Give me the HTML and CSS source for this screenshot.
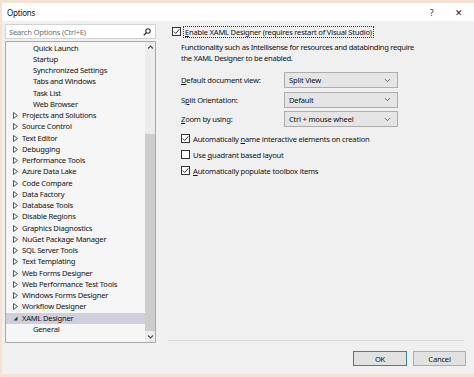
FILE: index.html
```html
<!DOCTYPE html>
<html>
<head>
<meta charset="utf-8">
<link rel="stylesheet" href="styles.css">
</head>
<body>
<div class="window">
  <div class="titlebar">
    <span class="title">Options</span>
    <span class="tb-btns"><span class="help">?</span><span class="close">✕</span></span>
  </div>
  <div class="body">
    <div class="left">
      <div class="search">
        <span class="placeholder">Search Options (Ctrl+E)</span>
        <svg class="mag" width="8" height="8" viewBox="0 0 8 8"><circle cx="5" cy="3" r="2.2" fill="none" stroke="#333" stroke-width="1.1"/><line x1="3.4" y1="4.6" x2="0.8" y2="7.2" stroke="#333" stroke-width="1.3"/></svg>
      </div>
      <div class="tree">
        <div class="rows">
          <div class="row l2">Quick Launch</div>
          <div class="row l2">Startup</div>
          <div class="row l2">Synchronized Settings</div>
          <div class="row l2">Tabs and Windows</div>
          <div class="row l2">Task List</div>
          <div class="row l2">Web Browser</div>
          <div class="row"><svg class="tri" width="5" height="7" viewBox="0 0 5 7"><path d="M0.5 0.5 L4.5 3.5 L0.5 6.5 Z" fill="none" stroke="#555" stroke-width="1"/></svg>Projects and Solutions</div>
          <div class="row"><svg class="tri" width="5" height="7" viewBox="0 0 5 7"><path d="M0.5 0.5 L4.5 3.5 L0.5 6.5 Z" fill="none" stroke="#555" stroke-width="1"/></svg>Source Control</div>
          <div class="row"><svg class="tri" width="5" height="7" viewBox="0 0 5 7"><path d="M0.5 0.5 L4.5 3.5 L0.5 6.5 Z" fill="none" stroke="#555" stroke-width="1"/></svg>Text Editor</div>
          <div class="row"><svg class="tri" width="5" height="7" viewBox="0 0 5 7"><path d="M0.5 0.5 L4.5 3.5 L0.5 6.5 Z" fill="none" stroke="#555" stroke-width="1"/></svg>Debugging</div>
          <div class="row"><svg class="tri" width="5" height="7" viewBox="0 0 5 7"><path d="M0.5 0.5 L4.5 3.5 L0.5 6.5 Z" fill="none" stroke="#555" stroke-width="1"/></svg>Performance Tools</div>
          <div class="row"><svg class="tri" width="5" height="7" viewBox="0 0 5 7"><path d="M0.5 0.5 L4.5 3.5 L0.5 6.5 Z" fill="none" stroke="#555" stroke-width="1"/></svg>Azure Data Lake</div>
          <div class="row"><svg class="tri" width="5" height="7" viewBox="0 0 5 7"><path d="M0.5 0.5 L4.5 3.5 L0.5 6.5 Z" fill="none" stroke="#555" stroke-width="1"/></svg>Code Compare</div>
          <div class="row"><svg class="tri" width="5" height="7" viewBox="0 0 5 7"><path d="M0.5 0.5 L4.5 3.5 L0.5 6.5 Z" fill="none" stroke="#555" stroke-width="1"/></svg>Data Factory</div>
          <div class="row"><svg class="tri" width="5" height="7" viewBox="0 0 5 7"><path d="M0.5 0.5 L4.5 3.5 L0.5 6.5 Z" fill="none" stroke="#555" stroke-width="1"/></svg>Database Tools</div>
          <div class="row"><svg class="tri" width="5" height="7" viewBox="0 0 5 7"><path d="M0.5 0.5 L4.5 3.5 L0.5 6.5 Z" fill="none" stroke="#555" stroke-width="1"/></svg>Disable Regions</div>
          <div class="row"><svg class="tri" width="5" height="7" viewBox="0 0 5 7"><path d="M0.5 0.5 L4.5 3.5 L0.5 6.5 Z" fill="none" stroke="#555" stroke-width="1"/></svg>Graphics Diagnostics</div>
          <div class="row"><svg class="tri" width="5" height="7" viewBox="0 0 5 7"><path d="M0.5 0.5 L4.5 3.5 L0.5 6.5 Z" fill="none" stroke="#555" stroke-width="1"/></svg>NuGet Package Manager</div>
          <div class="row"><svg class="tri" width="5" height="7" viewBox="0 0 5 7"><path d="M0.5 0.5 L4.5 3.5 L0.5 6.5 Z" fill="none" stroke="#555" stroke-width="1"/></svg>SQL Server Tools</div>
          <div class="row"><svg class="tri" width="5" height="7" viewBox="0 0 5 7"><path d="M0.5 0.5 L4.5 3.5 L0.5 6.5 Z" fill="none" stroke="#555" stroke-width="1"/></svg>Text Templating</div>
          <div class="row"><svg class="tri" width="5" height="7" viewBox="0 0 5 7"><path d="M0.5 0.5 L4.5 3.5 L0.5 6.5 Z" fill="none" stroke="#555" stroke-width="1"/></svg>Web Forms Designer</div>
          <div class="row"><svg class="tri" width="5" height="7" viewBox="0 0 5 7"><path d="M0.5 0.5 L4.5 3.5 L0.5 6.5 Z" fill="none" stroke="#555" stroke-width="1"/></svg>Web Performance Test Tools</div>
          <div class="row"><svg class="tri" width="5" height="7" viewBox="0 0 5 7"><path d="M0.5 0.5 L4.5 3.5 L0.5 6.5 Z" fill="none" stroke="#555" stroke-width="1"/></svg>Windows Forms Designer</div>
          <div class="row"><svg class="tri" width="5" height="7" viewBox="0 0 5 7"><path d="M0.5 0.5 L4.5 3.5 L0.5 6.5 Z" fill="none" stroke="#555" stroke-width="1"/></svg>Workflow Designer</div>
          <div class="row selected"><svg class="tri" width="5" height="7" viewBox="0 0 5 7"><path d="M4.5 1.5 L4.5 5.5 L0.5 5.5 Z" fill="#333"/></svg>XAML Designer</div>
          <div class="row l2">General</div>
        </div>
        <div class="scrollbar">
          <svg class="arrow" width="7" height="5" viewBox="0 0 7 5"><path d="M1 3.5 L3.5 1 L6 3.5" fill="none" stroke="#555" stroke-width="1.2"/></svg>
          <div class="track"><div class="thumb"></div></div>
          <svg class="arrow" width="7" height="5" viewBox="0 0 7 5"><path d="M1 1.5 L3.5 4 L6 1.5" fill="none" stroke="#555" stroke-width="1.2"/></svg>
        </div>
      </div>
    </div>
    <div class="right">
      <div class="check-row main">
        <span class="cb"><svg width="9" height="9" viewBox="0 0 9 9"><path d="M1.8 4.6 L3.7 6.5 L7.3 2.3" fill="none" stroke="#333" stroke-width="1"/></svg></span>
        <span class="focus"><u>E</u>nable XAML Designer (requires restart of Visual Studio)</span>
      </div>
      <p class="desc">Functionality such as Intellisense for resources and databinding require<br>the XAML Designer to be enabled.</p>
      <div class="fields">
        <div class="field"><span class="label"><u>D</u>efault document view:</span><span class="select">Split View<svg class="chev" width="7" height="5" viewBox="0 0 7 5"><path d="M1 1.2 L3.5 3.7 L6 1.2" fill="none" stroke="#666" stroke-width="1"/></svg></span></div>
        <div class="field"><span class="label">S<u>p</u>lit Orientation:</span><span class="select">Default<svg class="chev" width="7" height="5" viewBox="0 0 7 5"><path d="M1 1.2 L3.5 3.7 L6 1.2" fill="none" stroke="#666" stroke-width="1"/></svg></span></div>
        <div class="field"><span class="label"><u>Z</u>oom by using:</span><span class="select">Ctrl + mouse wheel<svg class="chev" width="7" height="5" viewBox="0 0 7 5"><path d="M1 1.2 L3.5 3.7 L6 1.2" fill="none" stroke="#666" stroke-width="1"/></svg></span></div>
      </div>
      <div class="checks">
        <div class="check-row"><span class="cb"><svg width="9" height="9" viewBox="0 0 9 9"><path d="M1.8 4.6 L3.7 6.5 L7.3 2.3" fill="none" stroke="#333" stroke-width="1"/></svg></span><span>Automatically <u>n</u>ame interactive elements on creation</span></div>
        <div class="check-row"><span class="cb"></span><span>Use <u>q</u>uadrant based layout</span></div>
        <div class="check-row"><span class="cb"><svg width="9" height="9" viewBox="0 0 9 9"><path d="M1.8 4.6 L3.7 6.5 L7.3 2.3" fill="none" stroke="#333" stroke-width="1"/></svg></span><span><u>A</u>utomatically populate toolbox items</span></div>
      </div>
      <div class="spacer"></div>
      <div class="sep"></div>
      <div class="buttons">
        <span class="btn default">OK</span>
        <span class="btn">Cancel</span>
      </div>
    </div>
  </div>
</div>
</body>
</html>
```

FILE: styles.css
```css
html, body {
  margin: 0;
  padding: 0;
}
body {
  width: 474px;
  height: 377px;
  overflow: hidden;
  background: #f0f0f0;
  font-family: "Noto Sans", "Open Sans", sans-serif;
  font-size: 7.6px;
  letter-spacing: -0.22px;
  color: #111;
}
.window {
  box-sizing: border-box;
  width: 474px;
  height: 377px;
  display: flex;
  flex-direction: column;
  border-top: 3px solid #f6e2d4;
  border-left: 2px solid #f6e2d4;
  border-bottom: 3px solid #f6e2d4;
  background: #f0f0f0;
}
.titlebar {
  height: 18px;
  background: #ffffff;
  display: flex;
  align-items: center;
  justify-content: space-between;
  padding-left: 5px;
}
.title {
  font-size: 8px;
  color: #111;
}
.tb-btns {
  display: flex;
  align-items: center;
  gap: 22px;
  margin-right: 11px;
  font-size: 8.5px;
  color: #222;
}
.help { font-size: 8px; }
.close { font-size: 9px; }
.body {
  flex: 1;
  display: flex;
  min-height: 0;
}
.left {
  width: 151px;
  margin-left: 3px;
  padding-top: 3px;
  display: flex;
  flex-direction: column;
}
.search {
  box-sizing: border-box;
  height: 15px;
  background: #fff;
  border: 1px solid #d3d3d3;
  display: flex;
  align-items: center;
  justify-content: space-between;
  padding: 0 4px 0 3px;
}
.placeholder {
  color: #707070;
}
.tree {
  box-sizing: border-box;
  margin-top: 2px;
  height: 302px;
  border: 1px solid #a9a9a9;
  background: #f6f6f6;
  display: flex;
}
.rows {
  flex: 1;
  padding-top: 0.5px;
}
.row {
  height: 11.25px;
  line-height: 11.25px;
  padding-left: 7px;
  display: flex;
  align-items: center;
  white-space: nowrap;
}
.row .tri {
  margin-right: 4px;
  flex: none;
}
.row.l2 {
  padding-left: 27px;
}
.row.selected {
  background: #cfd0dc;
}
.scrollbar {
  width: 10px;
  display: flex;
  flex-direction: column;
  align-items: center;
  background: #ececec;
}
.scrollbar .arrow {
  margin: 3px 0;
  flex: none;
}
.track {
  flex: 1;
  width: 100%;
  display: flex;
  flex-direction: column;
  justify-content: flex-end;
}
.thumb {
  height: 197px;
  width: 100%;
  background: #cdcdcd;
}
.right {
  flex: 1;
  margin-left: 12px;
  margin-right: 10px;
  display: flex;
  flex-direction: column;
  padding-top: 5px;
}
.check-row {
  display: flex;
  align-items: center;
  height: 11px;
  white-space: nowrap;
}
.cb {
  box-sizing: border-box;
  width: 9px;
  height: 9px;
  border: 1px solid #333;
  background: #fff;
  display: inline-flex;
  margin-right: 3px;
  flex: none;
  position: relative;
}
.cb svg {
  position: absolute;
  left: -1px;
  top: -1px;
}
.check-row.main {
  margin-left: 4px;
}
.focus {
  outline: 1px dotted #333;
  outline-offset: 0px;
  padding: 0 1px;
}
.desc {
  margin: 5px 0 0 13px;
  line-height: 11px;
  letter-spacing: -0.3px;
}
.fields {
  margin-top: 8px;
  margin-left: 13px;
  display: flex;
  flex-direction: column;
  gap: 3.5px;
}
.field {
  display: flex;
  align-items: center;
  height: 16px;
}
.label {
  width: 103px;
  flex: none;
}
.select {
  box-sizing: border-box;
  width: 114px;
  height: 16px;
  background: #e5e5e5;
  border: 1px solid #adadad;
  display: flex;
  align-items: center;
  justify-content: space-between;
  padding: 0 6px 0 4px;
}
.checks {
  margin-top: 6px;
  margin-left: 13px;
  display: flex;
  flex-direction: column;
  gap: 5px;
}
.spacer {
  flex: 1;
}
.sep {
  height: 1px;
  background: #d8d8d8;
}
.buttons {
  display: flex;
  justify-content: flex-end;
  gap: 6px;
  margin-top: 10px;
  margin-bottom: 8px;
  margin-right: -2px;
}
.btn {
  box-sizing: border-box;
  width: 53px;
  height: 15px;
  border: 1px solid #adadad;
  background: #e1e1e1;
  display: flex;
  align-items: center;
  justify-content: center;
}
.btn.default {
  width: 54px;
  border-color: #3c7fb1;
}
u {
  text-decoration-thickness: 1px;
  text-underline-offset: 1px;
}
```
